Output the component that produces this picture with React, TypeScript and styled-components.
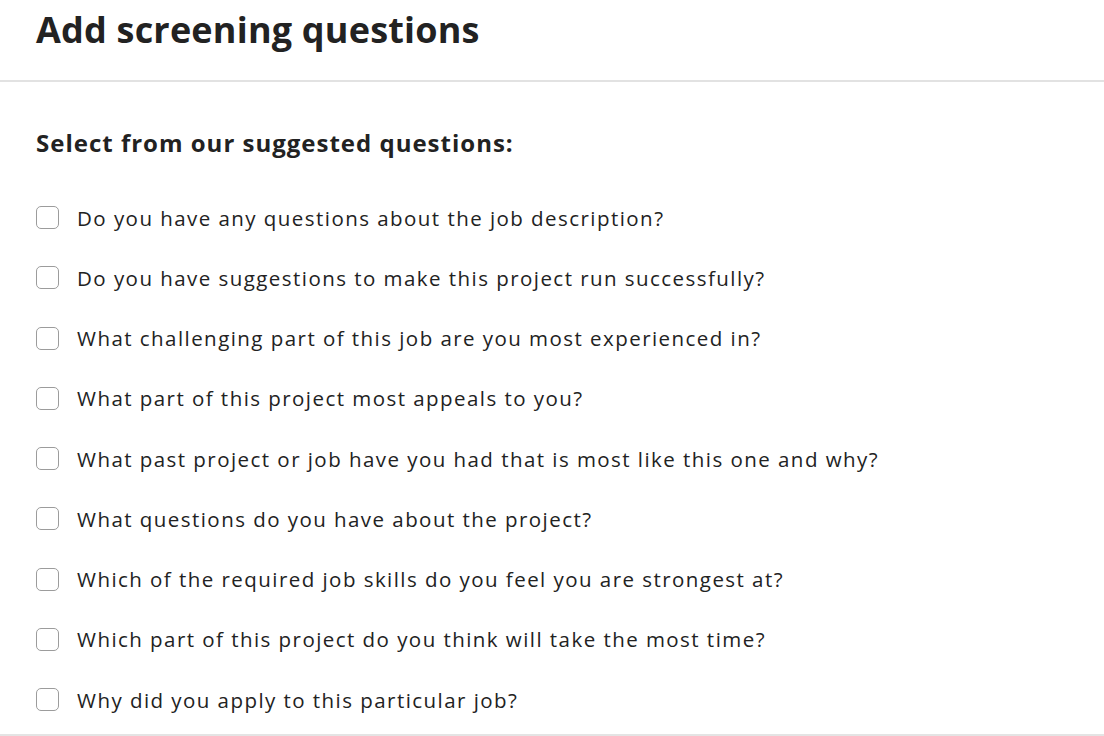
import React from "react";
import styled, { createGlobalStyle } from "styled-components";

const Global = createGlobalStyle`
  html, body { margin: 0; padding: 0; background: #ffffff; }
  body { font-family: "Open Sans", "Liberation Sans", sans-serif; color: #1f1f1f; }
`;

const Page = styled.div`
  width: 1104px;
  height: 736px;
  display: flex;
  flex-direction: column;
  overflow: hidden;
  box-sizing: border-box;
  border-bottom: 2px solid #e4e4e4;
`;

const Header = styled.header`
  height: 82px;
  flex: none;
  box-sizing: border-box;
  border-bottom: 2px solid #e2e2e2;
  padding: 8px 36px 0;
`;

const Title = styled.h1`
  margin: 0;
  font-size: 36px;
  font-weight: 700;
  line-height: 44px;
  letter-spacing: 0.2px;
  color: #222222;
`;

const Body = styled.section`
  padding: 46px 36px 0;
  display: flex;
  flex-direction: column;
`;

const Subtitle = styled.h2`
  margin: 0 0 29.5px;
  font-size: 24px;
  font-weight: 700;
  line-height: 30px;
  letter-spacing: 1px;
  color: #222222;
`;

const List = styled.ul`
  list-style: none;
  margin: 0;
  padding: 0;
  display: flex;
  flex-direction: column;
`;

const Row = styled.li`
  height: 60.25px;
  display: flex;
  align-items: center;
  gap: 18px;
`;

const Box = styled.span`
  width: 23px;
  height: 23px;
  box-sizing: border-box;
  border: 1.5px solid #9c9c9c;
  border-radius: 5px;
  flex: none;
`;

const Label = styled.span`
  font-size: 20.5px;
  letter-spacing: 1.45px;
  color: #222222;
`;

const questions = [
  "Do you have any questions about the job description?",
  "Do you have suggestions to make this project run successfully?",
  "What challenging part of this job are you most experienced in?",
  "What part of this project most appeals to you?",
  "What past project or job have you had that is most like this one and why?",
  "What questions do you have about the project?",
  "Which of the required job skills do you feel you are strongest at?",
  "Which part of this project do you think will take the most time?",
  "Why did you apply to this particular job?",
];

export default function App() {
  return (
    <>
      <Global />
      <Page>
        <Header>
          <Title>Add screening questions</Title>
        </Header>
        <Body>
          <Subtitle>Select from our suggested questions:</Subtitle>
          <List>
            {questions.map((q) => (
              <Row key={q}>
                <Box />
                <Label>{q}</Label>
              </Row>
            ))}
          </List>
        </Body>
      </Page>
    </>
  );
}
